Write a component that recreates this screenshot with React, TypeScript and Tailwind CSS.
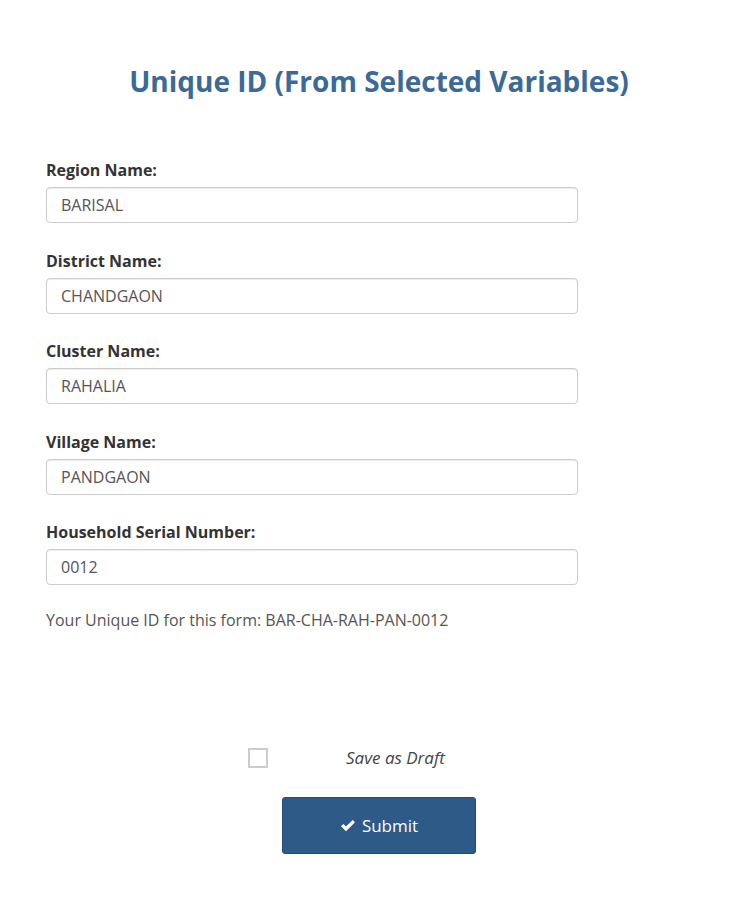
import React, { useState } from 'react';

const fields = [
  { label: 'Region Name:', value: 'BARISAL' },
  { label: 'District Name:', value: 'CHANDGAON' },
  { label: 'Cluster Name:', value: 'RAHALIA' },
  { label: 'Village Name:', value: 'PANDGAON' },
  { label: 'Household Serial Number:', value: '0012' },
];

export default function App() {
  const [draft, setDraft] = useState(false);

  return (
    <div className="min-h-screen bg-white font-['Open_Sans',sans-serif] text-[#333]">
      <div className="pt-[61px]">
        <h1 className="text-center text-[28px] font-bold leading-[40px] text-[#3b6a98] pl-[8px]">
          Unique ID (From Selected Variables)
        </h1>

        <form className="mt-[58px] ml-[46px] w-[532px]" onSubmit={e => e.preventDefault()}>
          <div className="flex flex-col gap-[26.5px]">
            {fields.map(f => (
              <div key={f.label}>
                <label className="block text-[16px] font-bold leading-[22px] mb-[6px]">{f.label}</label>
                <input
                  defaultValue={f.value}
                  className="block w-full h-[36px] rounded-[4px] border border-[#ccc] px-[14px] text-[16px] text-[#555] shadow-[inset_0_1px_1px_rgba(0,0,0,0.075)] outline-none"
                />
              </div>
            ))}
          </div>
          <p className="mt-[24px] text-[16px] leading-[22px] text-[#555]">
            Your Unique ID for this form: BAR-CHA-RAH-PAN-0012
          </p>
        </form>

        <label className="mt-[115px] flex items-center h-[24px]">
          <input
            type="checkbox"
            checked={draft}
            onChange={e => setDraft(e.target.checked)}
            className="appearance-none ml-[248px] w-[20px] h-[20px] border-2 border-[#ccc] bg-white checked:bg-[#2d5a87]"
          />
          <span className="ml-[78px] italic text-[17px] text-[#444]">Save as Draft</span>
        </label>

        <button className="mt-[27px] ml-[282px] w-[194px] h-[57px] rounded-[3px] bg-[#2d5a87] border border-[#254b72] text-white text-[17px] flex items-center justify-center gap-[6px]">
          <svg width="16" height="13" viewBox="0 0 16 13">
            <path d="M1 7.2 L3.3 4.9 L6 7.6 L12.7 0.9 L15 3.2 L6 12.2 Z" fill="white" />
          </svg>
          Submit
        </button>
      </div>
    </div>
  );
}
